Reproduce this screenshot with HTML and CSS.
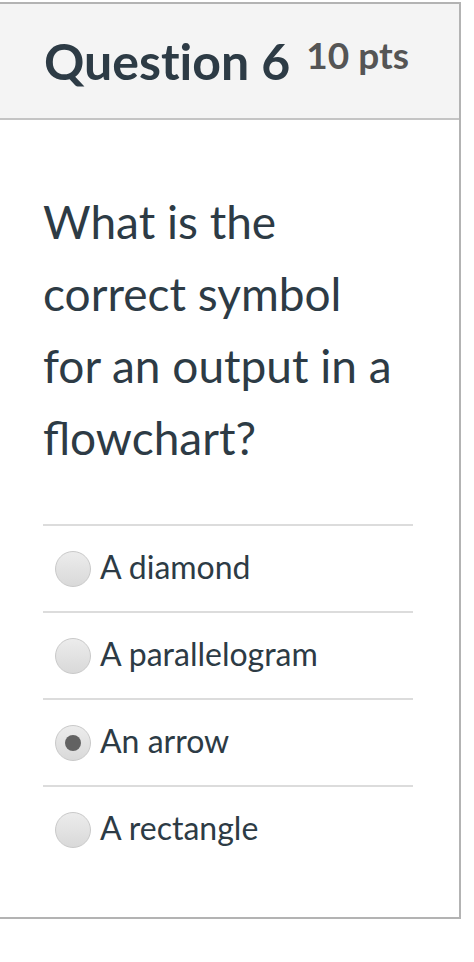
FILE: index.html
```html
<!DOCTYPE html>
<html lang="en">
<head>
<meta charset="utf-8">
<title>Question 6</title>
<link rel="stylesheet" href="styles.css">
</head>
<body>
<div class="card">
  <div class="header">
    <span class="title">Question 6</span>
    <span class="pts">10 pts</span>
  </div>
  <div class="content">
    <p class="question">What is the correct symbol for an output in a flowchart?</p>
    <div class="answers">
      <label class="answer"><span class="radio"></span><span class="label">A diamond</span></label>
      <label class="answer"><span class="radio"></span><span class="label">A parallelogram</span></label>
      <label class="answer"><span class="radio checked"></span><span class="label">An arrow</span></label>
      <label class="answer"><span class="radio"></span><span class="label">A rectangle</span></label>
    </div>
  </div>
</div>
</body>
</html>
```

FILE: styles.css
```css
html, body {
  margin: 0;
  padding: 0;
  background: #ffffff;
}
body {
  font-family: Lato, "Open Sans", sans-serif;
  color: #2d3b45;
}
.card {
  box-sizing: border-box;
  width: 461px;
  height: 917px;
  margin-top: 2px;
  border-top: 2px solid #b3b3b3;
  border-right: 2px solid #b3b3b3;
  border-bottom: 2px solid #b3b3b3;
  display: flex;
  flex-direction: column;
}
.header {
  box-sizing: border-box;
  height: 116px;
  background: #f4f4f4;
  border-bottom: 2px solid #c4c4c4;
  padding-left: 44px;
  display: flex;
  align-items: flex-start;
  gap: 16px;
}
.title {
  font-weight: 700;
  font-size: 50px;
  line-height: 1;
  margin-top: 32px;
  color: #2d3b45;
  font-variant-ligatures: none;
}
.pts {
  font-weight: 700;
  font-size: 37px;
  line-height: 1;
  margin-top: 32px;
  color: #555555;
}
.content {
  padding: 66px 46px 0 43px;
}
.question {
  margin: 0 12px 50px 0;
  font-size: 46px;
  line-height: 72px;
  color: #2d3b45;
}
.answers {
  display: flex;
  flex-direction: column;
}
.answer {
  display: flex;
  align-items: center;
  height: 87px;
  box-sizing: border-box;
  border-top: 2px solid #dcdcdc;
  padding-left: 12px;
  gap: 9px;
}
.radio {
  box-sizing: border-box;
  width: 36px;
  height: 36px;
  border-radius: 50%;
  border: 1px solid #c9c9c9;
  background: linear-gradient(#ececec, #d9d9d9);
  display: flex;
  align-items: center;
  justify-content: center;
  flex: none;
}
.radio.checked::after {
  content: "";
  width: 16px;
  height: 16px;
  border-radius: 50%;
  background: #626262;
}
.label {
  font-size: 32px;
  line-height: 1;
  margin-top: -4px;
  color: #2d3b45;
}
```
